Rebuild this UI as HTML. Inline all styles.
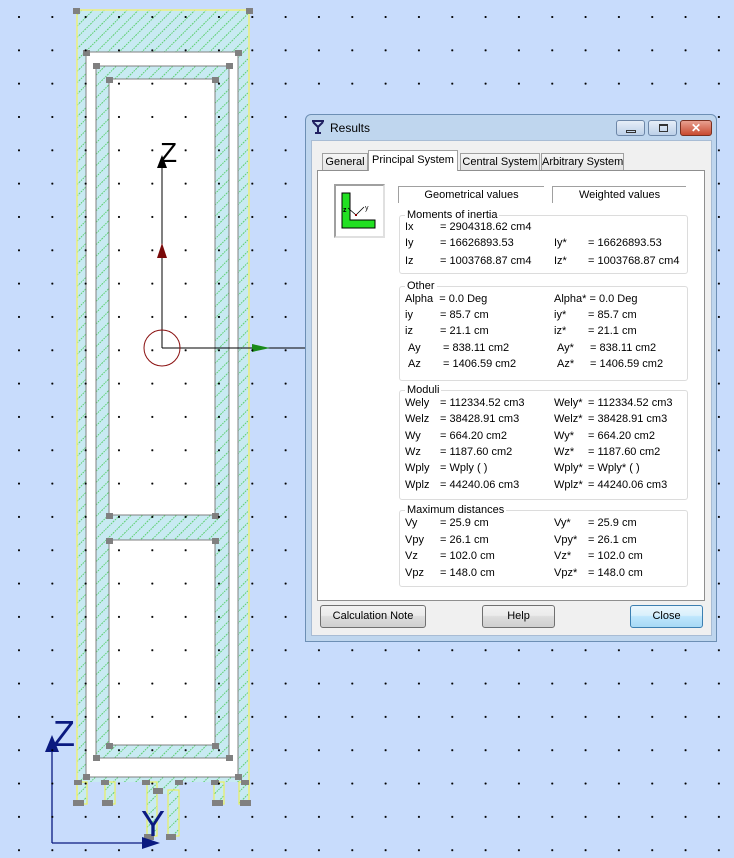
<!DOCTYPE html>
<html><head><meta charset="utf-8"><style>
*{margin:0;padding:0;box-sizing:border-box}
body{width:734px;height:858px;overflow:hidden;background:#c8dcfc;position:relative;font-family:"Liberation Sans",sans-serif;font-size:11px;color:#000}
.dots{position:absolute;inset:0;background-image:radial-gradient(circle at 1px 1px,#000 0.9px,transparent 1.2px);background-size:33.33px 33.33px;background-position:18px 16px}
.a{position:absolute;white-space:nowrap}
#dlg{position:absolute;left:305px;top:114px;width:412px;height:528px;background:#bfd6ee;border:1px solid #6d8fb4;border-radius:6px 6px 0 0}
#client{position:absolute;left:5px;top:25px;width:401px;height:496px;background:#f0f0f0;border:1px solid #a8bcd4}
.tab{position:absolute;top:12px;height:18px;border:1px solid #a0a0a0;border-bottom:none;background:linear-gradient(#f6f6f6,#e2e2e2);padding-top:2px;text-align:center;font-size:11px;white-space:nowrap}
.panel{position:absolute;left:5px;top:29px;width:388px;height:431px;background:#fff;border:1px solid #8f8f8f}
.grp{position:absolute;border:1px solid #dcdcdc;border-radius:3px}
.grp .t{position:absolute;top:-7px;left:5px;background:#fff;padding:0 2px;line-height:12px}
.btn{position:absolute;top:464px;height:23px;border:1px solid #707070;border-radius:3px;background:linear-gradient(#f2f2f2 0,#ebebeb 45%,#dddddd 50%,#cfcfcf);text-align:center;line-height:21px;font-size:11px}
.hd{position:absolute;top:15px;height:17px;border-top:1px solid #a0a0a0;border-left:1px solid #a0a0a0;text-align:center;line-height:16px}
</style></head><body>
<svg class="a" style="left:0;top:0" width="734" height="858">
<defs>
<pattern id="h" width="8" height="8" patternUnits="userSpaceOnUse" patternTransform="rotate(45)">
<rect width="8" height="8" fill="#c8eaf2"/><line x1="1" y1="0" x2="1" y2="8" stroke="#50cc60" stroke-width="0.9" stroke-dasharray="1.5 1"/></pattern>
</defs>
<rect x="77" y="10" width="172" height="772" fill="url(#h)"/>
<rect x="86" y="52" width="152" height="725" fill="#fff" stroke="#808080"/>
<rect x="96" y="66" width="133" height="692" fill="url(#h)" stroke="#808080"/>
<rect x="109" y="79" width="106" height="436" fill="#fff" stroke="#808080"/>
<rect x="109" y="540" width="106" height="205" fill="#fff" stroke="#808080"/>
<line x1="109" y1="515" x2="215" y2="515" stroke="#808080"/>
<g fill="url(#h)" stroke="#e8f060" stroke-width="1.2">
<rect x="77" y="782" width="10" height="22"/><rect x="105" y="782" width="10" height="22"/>
<rect x="146" y="782" width="33" height="12" stroke="none"/>
<rect x="147" y="782" width="10" height="54"/><rect x="168" y="790" width="11" height="46"/>
<rect x="214" y="782" width="10" height="22"/><rect x="239" y="782" width="10" height="22"/>
</g>
<path d="M77 10 H249 V804 M77 10 V804" fill="none" stroke="#eef07a" stroke-width="1.5"/>
<g fill="#808080">
<rect x="73" y="8" width="7" height="6"/><rect x="246" y="8" width="7" height="6"/>
<rect x="83" y="50" width="7" height="6"/><rect x="235" y="50" width="7" height="6"/>
<rect x="93" y="63" width="7" height="6"/><rect x="226" y="63" width="7" height="6"/>
<rect x="106" y="77" width="7" height="6"/><rect x="212" y="77" width="7" height="6"/>
<rect x="106" y="513" width="7" height="6"/><rect x="212" y="513" width="7" height="6"/>
<rect x="106" y="538" width="7" height="6"/><rect x="212" y="538" width="7" height="6"/>
<rect x="106" y="743" width="7" height="6"/><rect x="212" y="743" width="7" height="6"/>
<rect x="93" y="755" width="7" height="6"/><rect x="226" y="755" width="7" height="6"/>
<rect x="83" y="774" width="7" height="6"/><rect x="235" y="774" width="7" height="6"/>
<rect x="74" y="780" width="8" height="5"/><rect x="101" y="780" width="8" height="5"/><rect x="142" y="780" width="8" height="5"/><rect x="175" y="780" width="8" height="5"/><rect x="211" y="780" width="8" height="5"/><rect x="241" y="780" width="8" height="5"/>
<rect x="73" y="800" width="11" height="6"/><rect x="102" y="800" width="11" height="6"/><rect x="212" y="800" width="11" height="6"/><rect x="240" y="800" width="11" height="6"/>
<rect x="153" y="788" width="10" height="6"/><rect x="166" y="834" width="10" height="6"/><rect x="144" y="834" width="10" height="6"/>
</g>
<line x1="162" y1="160" x2="162" y2="348" stroke="#000"/>
<line x1="162" y1="348" x2="305" y2="348" stroke="#000"/>
<polygon points="162,155 157,168 167,168" fill="#000"/>
<polygon points="162,243 157,258 167,258" fill="#7a0a0a"/>
<polygon points="252,344 270,348 252,352" fill="#1a8a1a"/>
<circle cx="162" cy="348" r="18" fill="none" stroke="#8a1010"/>
<text x="160" y="162" font-family="Liberation Sans" font-size="28" fill="#000">Z</text>
<line x1="52" y1="745" x2="52" y2="843" stroke="#0a1a80" stroke-width="1.3"/>
<line x1="52" y1="843" x2="158" y2="843" stroke="#0a1a80" stroke-width="1.3"/>
<polygon points="52,735 45,752 59,752" fill="#0a1a80"/>
<polygon points="160,843 142,837 142,849" fill="#0a1a80"/>
<text x="53" y="746" font-family="Liberation Sans" font-size="36" fill="#0a1a80">Z</text>
<text x="141" y="836" font-family="Liberation Sans" font-size="36" fill="#0a1a80">Y</text>
</svg>
<div class="dots"></div>

<div id="dlg">
<svg class="a" style="left:5px;top:5px" width="14" height="14"><path d="M1 1 H13 M2 2 L7 7 L12 2 M7 7 V13 M4 13 H10" stroke="#202060" stroke-width="2" fill="none"/></svg>
<div class="a" style="left:24px;top:6px;font-size:12px">Results</div>
<div class="a" style="left:310px;top:5px;width:29px;height:16px;border:1px solid #6d87a8;border-radius:3px;background:linear-gradient(#e6eef8,#bcd0e8)"><div class="a" style="left:9px;top:9px;width:10px;height:3px;border:1px solid #333"></div></div>
<div class="a" style="left:342px;top:5px;width:29px;height:16px;border:1px solid #6d87a8;border-radius:3px;background:linear-gradient(#e6eef8,#bcd0e8)"><div class="a" style="left:10px;top:3px;width:9px;height:8px;border:1px solid #333;border-top-width:2px"></div></div>
<div class="a" style="left:374px;top:5px;width:32px;height:16px;border:1px solid #7a3020;border-radius:3px;background:linear-gradient(#e8a090,#c84a30);color:#fff;font-weight:bold;text-align:center;line-height:15px;font-size:12px">✕</div>
<div id="client">
<div class="tab" style="left:10px;width:46px">General</div>
<div class="tab" style="left:56px;width:90px;top:9px;height:21px;background:#fff;z-index:2;padding-top:3px">Principal System</div>
<div class="tab" style="left:148px;width:80px">Central System</div>
<div class="tab" style="left:229px;width:83px">Arbitrary System</div>
<div class="panel">
<div class="a" style="left:16px;top:13px;width:51px;height:54px;border:2px solid #a0a0a0;border-right-color:#e0e0e0;border-bottom-color:#e0e0e0;background:#fff">
<svg width="47" height="50"><path d="M6 7 H14 V34 H39 V42 H6 Z" fill="#22e022" stroke="#000"/><path d="M12 22 L20 29 L28 21" stroke="#000" fill="none" stroke-width=".8"/><text x="7" y="26" font-size="7" font-weight="bold">z</text><text x="29" y="24" font-size="7">y</text><rect x="19" y="28" width="2" height="2" fill="#800"/></svg></div>
<div class="hd" style="left:80px;width:146px">Geometrical values</div>
<div class="hd" style="left:234px;width:134px">Weighted values</div>
<div class="grp" style="left:81px;top:44px;width:289px;height:59px"><div class="t">Moments of inertia</div></div>
<div class="grp" style="left:81px;top:115px;width:289px;height:95px"><div class="t">Other</div></div>
<div class="grp" style="left:81px;top:219px;width:289px;height:110px"><div class="t">Moduli</div></div>
<div class="grp" style="left:81px;top:339px;width:289px;height:77px"><div class="t">Maximum distances</div></div>
</div>
<div class="btn" style="left:8px;width:106px">Calculation Note</div>
<div class="btn" style="left:170px;width:73px">Help</div>
<div class="btn" style="left:318px;width:73px;border-color:#3c7fb1;background:linear-gradient(#eaf6fd,#d9f0fc 45%,#bee6fd 50%,#a7d9f5)">Close</div>
</div>
</div>

<div style="position:absolute;left:0;top:0;font-size:11px;line-height:13px">
<div class="a" style="left:405px;top:221px">Ix</div><div class="a" style="left:440px;top:221px">= 2904318.62 cm4</div>
<div class="a" style="left:405px;top:237px">Iy</div><div class="a" style="left:440px;top:237px">= 16626893.53</div>
<div class="a" style="left:554px;top:237px">Iy*</div><div class="a" style="left:588px;top:237px">= 16626893.53</div>
<div class="a" style="left:405px;top:255px">Iz</div><div class="a" style="left:440px;top:255px">= 1003768.87 cm4</div>
<div class="a" style="left:554px;top:255px">Iz*</div><div class="a" style="left:588px;top:255px">= 1003768.87 cm4</div>

<div class="a" style="left:405px;top:293px">Alpha&nbsp; = 0.0 Deg</div><div class="a" style="left:554px;top:293px">Alpha* = 0.0 Deg</div>
<div class="a" style="left:405px;top:309px">iy</div><div class="a" style="left:440px;top:309px">= 85.7 cm</div><div class="a" style="left:554px;top:309px">iy*</div><div class="a" style="left:588px;top:309px">= 85.7 cm</div>
<div class="a" style="left:405px;top:325px">iz</div><div class="a" style="left:440px;top:325px">= 21.1 cm</div><div class="a" style="left:554px;top:325px">iz*</div><div class="a" style="left:588px;top:325px">= 21.1 cm</div>
<div class="a" style="left:408px;top:342px">Ay</div><div class="a" style="left:443px;top:342px">= 838.11 cm2</div><div class="a" style="left:557px;top:342px">Ay*</div><div class="a" style="left:590px;top:342px">= 838.11 cm2</div>
<div class="a" style="left:408px;top:358px">Az</div><div class="a" style="left:443px;top:358px">= 1406.59 cm2</div><div class="a" style="left:557px;top:358px">Az*</div><div class="a" style="left:590px;top:358px">= 1406.59 cm2</div>

<div class="a" style="left:405px;top:397px">Wely</div><div class="a" style="left:440px;top:397px">= 112334.52 cm3</div><div class="a" style="left:554px;top:397px">Wely*</div><div class="a" style="left:588px;top:397px">= 112334.52 cm3</div>
<div class="a" style="left:405px;top:413px">Welz</div><div class="a" style="left:440px;top:413px">= 38428.91 cm3</div><div class="a" style="left:554px;top:413px">Welz*</div><div class="a" style="left:588px;top:413px">= 38428.91 cm3</div>
<div class="a" style="left:405px;top:430px">Wy</div><div class="a" style="left:440px;top:430px">= 664.20 cm2</div><div class="a" style="left:554px;top:430px">Wy*</div><div class="a" style="left:588px;top:430px">= 664.20 cm2</div>
<div class="a" style="left:405px;top:446px">Wz</div><div class="a" style="left:440px;top:446px">= 1187.60 cm2</div><div class="a" style="left:554px;top:446px">Wz*</div><div class="a" style="left:588px;top:446px">= 1187.60 cm2</div>
<div class="a" style="left:405px;top:462px">Wply</div><div class="a" style="left:440px;top:462px">= Wply ( )</div><div class="a" style="left:554px;top:462px">Wply*</div><div class="a" style="left:588px;top:462px">= Wply* ( )</div>
<div class="a" style="left:405px;top:479px">Wplz</div><div class="a" style="left:440px;top:479px">= 44240.06 cm3</div><div class="a" style="left:554px;top:479px">Wplz*</div><div class="a" style="left:588px;top:479px">= 44240.06 cm3</div>

<div class="a" style="left:405px;top:517px">Vy</div><div class="a" style="left:440px;top:517px">= 25.9 cm</div><div class="a" style="left:554px;top:517px">Vy*</div><div class="a" style="left:588px;top:517px">= 25.9 cm</div>
<div class="a" style="left:405px;top:534px">Vpy</div><div class="a" style="left:440px;top:534px">= 26.1 cm</div><div class="a" style="left:554px;top:534px">Vpy*</div><div class="a" style="left:588px;top:534px">= 26.1 cm</div>
<div class="a" style="left:405px;top:550px">Vz</div><div class="a" style="left:440px;top:550px">= 102.0 cm</div><div class="a" style="left:554px;top:550px">Vz*</div><div class="a" style="left:588px;top:550px">= 102.0 cm</div>
<div class="a" style="left:405px;top:567px">Vpz</div><div class="a" style="left:440px;top:567px">= 148.0 cm</div><div class="a" style="left:554px;top:567px">Vpz*</div><div class="a" style="left:588px;top:567px">= 148.0 cm</div>
</div>
</body></html>
